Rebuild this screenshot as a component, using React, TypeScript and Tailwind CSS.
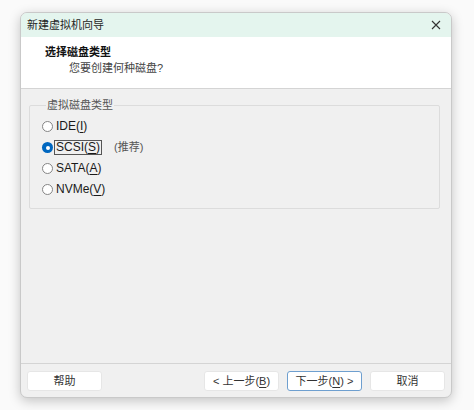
import React from "react";

const ui = { fontFamily: '"Liberation Sans", "Noto Sans CJK SC", sans-serif' };

function Radio({ checked }: { checked?: boolean }) {
  return checked ? (
    <span className="flex h-[11px] w-[11px] items-center justify-center rounded-full bg-[#0067c0]">
      <span className="h-[4px] w-[4px] rounded-full bg-white" />
    </span>
  ) : (
    <span className="h-[11px] w-[11px] rounded-full border border-[#858585] bg-white" />
  );
}

function Option({
  pre,
  key_,
  checked,
  focused,
  extra,
}: {
  pre: string;
  key_: string;
  checked?: boolean;
  focused?: boolean;
  extra?: string;
}) {
  return (
    <div className="flex h-[21px] items-center">
      <Radio checked={checked} />
      <span
        className={
          "ml-[1px] px-[1px] leading-[13px] text-[12px] text-[#1a1a1a] " +
          (focused ? "border border-[#555]" : "border border-transparent")
        }
      >
        {pre}(<span className="underline underline-offset-2">{key_}</span>)
      </span>
      {extra && <span className="ml-[12px] text-[11px] text-[#555]">{extra}</span>}
    </div>
  );
}

function Btn({ children, primary }: { children: React.ReactNode; primary?: boolean }) {
  return (
    <button
      className={
        "flex h-[20px] w-[75px] items-center justify-center rounded-[3px] bg-white text-[11px] text-[#333] " +
        (primary ? "border border-[#6e9fcf]" : "border border-[#e6e6e6]")
      }
    >
      {children}
    </button>
  );
}

export default function App() {
  return (
    <div className="h-[410px] w-[474px] bg-[#fafafa] pl-[20px] pt-[12px]" style={ui}>
      <div className="flex h-[386px] w-[432px] flex-col overflow-hidden rounded-[7px] border border-[#c9c9c9] bg-[#f0f0f0] shadow-[0_3px_12px_rgba(0,0,0,0.22)]">
        {/* title bar */}
        <div className="flex h-[24px] items-center justify-between bg-[#e4f5ee] pl-[6px] pr-[10px]">
          <span className="text-[11px] text-[#1f1f1f]">新建虚拟机向导</span>
          <svg width="10" height="10" viewBox="0 0 10 10" className="text-[#333]">
            <path d="M1 1 L9 9 M9 1 L1 9" stroke="currentColor" strokeWidth="1.1" />
          </svg>
        </div>

        {/* header */}
        <div className="h-[52px] border-b border-[#d4d4d4] bg-white pl-[24px] pt-[7px]">
          <div className="h-[16px] text-[11px] font-bold leading-[16px] text-[#111]">选择磁盘类型</div>
          <div className="ml-[24px] h-[16px] text-[11px] leading-[16px] text-[#444]">您要创建何种磁盘?</div>
        </div>

        {/* body */}
        <div className="flex-1 pl-[8px] pr-[11px] pt-[8px]">
          <fieldset className="h-[112px] rounded-[2px] border border-[#dcdcdc] pl-[12px]">
            <legend className="ml-[4px] px-[1px] text-[11px] leading-[16px] text-[#555]">虚拟磁盘类型</legend>
            <div className="pt-[3px]">
              <Option pre="IDE" key_="I" />
              <Option pre="SCSI" key_="S" checked focused extra="(推荐)" />
              <Option pre="SATA" key_="A" />
              <Option pre="NVMe" key_="V" />
            </div>
          </fieldset>
        </div>

        {/* footer */}
        <div className="flex h-[34px] border-t border-[#d4d4d4] px-[6px] pt-[7px]">
          <Btn>帮助</Btn>
          <div className="ml-auto flex gap-[8px]">
            <Btn>
              &lt; 上一步(<span className="underline underline-offset-2">B</span>)
            </Btn>
            <Btn primary>
              下一步(<span className="underline underline-offset-2">N</span>) &gt;
            </Btn>
            <Btn>取消</Btn>
          </div>
        </div>
      </div>
    </div>
  );
}
